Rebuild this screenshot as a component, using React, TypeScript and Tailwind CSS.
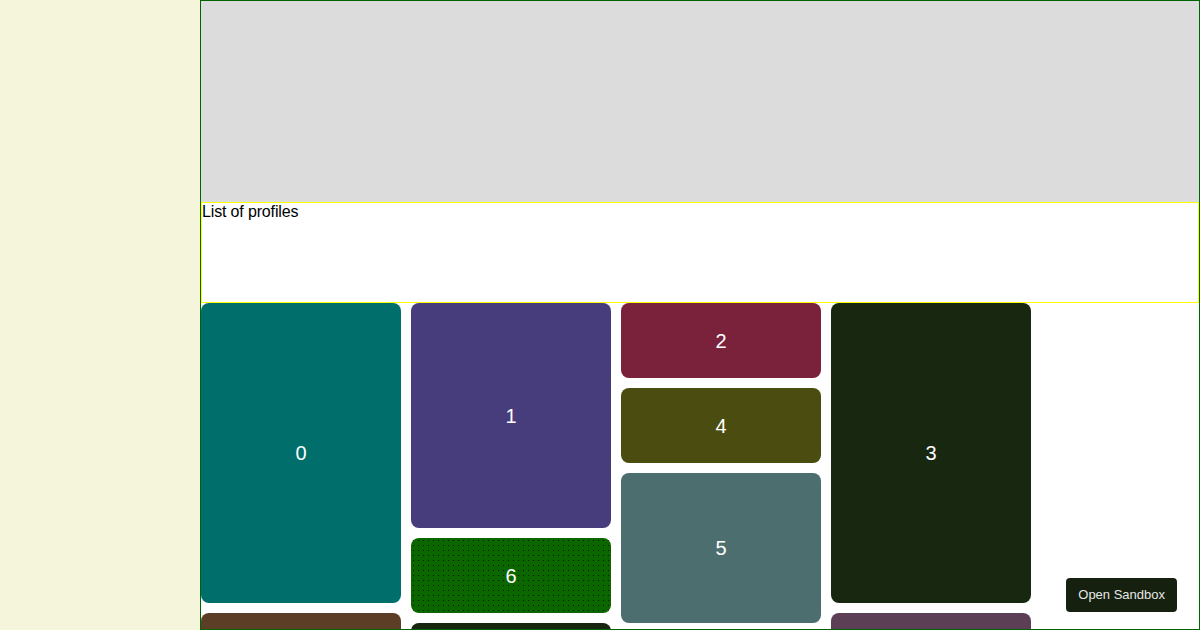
import React from "react";

type Card = { id: string; label: string; h: number; bg: string; dots?: boolean };

const columns: Card[][] = [
  [
    { id: "0", label: "0", h: 300, bg: "bg-[#006f6b]" },
    { id: "7", label: "", h: 200, bg: "bg-[#5c3d26]" },
  ],
  [
    { id: "1", label: "1", h: 225, bg: "bg-[#473d7c]" },
    { id: "6", label: "6", h: 75, bg: "bg-[#0b6600]", dots: true },
    { id: "8", label: "", h: 200, bg: "bg-[#18250f]" },
  ],
  [
    { id: "2", label: "2", h: 75, bg: "bg-[#7a213b]" },
    { id: "4", label: "4", h: 75, bg: "bg-[#4b4c10]" },
    { id: "5", label: "5", h: 150, bg: "bg-[#4d6e6f]" },
    { id: "9", label: "", h: 200, bg: "bg-[#7a213b]" },
  ],
  [
    { id: "3", label: "3", h: 300, bg: "bg-[#182810]" },
    { id: "10", label: "", h: 200, bg: "bg-[#5c3f55]" },
  ],
];

export default function App() {
  return (
    <div className="flex h-[630px] w-[1200px] overflow-hidden font-['Liberation_Sans',Arial,sans-serif]">
      <div className="w-[200px] shrink-0 bg-[#f5f5dc]" />
      <div className="flex h-[630px] flex-1 flex-col overflow-hidden border border-[#006400]">
        <div className="h-[201px] shrink-0 bg-[#dcdcdc]" />
        <div className="h-[101px] shrink-0 border border-[#ffff00] bg-white text-[16px] leading-[18px] tracking-[-0.15px] text-black">
          List of profiles
        </div>
        <div className="flex gap-[10px] bg-white">
          {columns.map((col, ci) => (
            <div key={ci} className="flex w-[200px] shrink-0 flex-col gap-[10px]">
              {col.map((c) => (
                <div
                  key={c.id}
                  style={{ height: c.h }}
                  className={`flex items-center justify-center rounded-[8px] text-[20px] text-white ${c.bg} ${
                    c.dots
                      ? "bg-[radial-gradient(rgba(0,0,0,0.75)_0.5px,transparent_0.9px)] bg-[length:5px_5px]"
                      : ""
                  }`}
                >
                  {c.label}
                </div>
              ))}
            </div>
          ))}
        </div>
      </div>
      <div className="fixed bottom-[18px] right-[23px] rounded-[4px] bg-[#15200f] px-[12px] py-[9px] text-[13px] leading-[16px] text-[#e6e6e6]">
        Open Sandbox
      </div>
    </div>
  );
}
